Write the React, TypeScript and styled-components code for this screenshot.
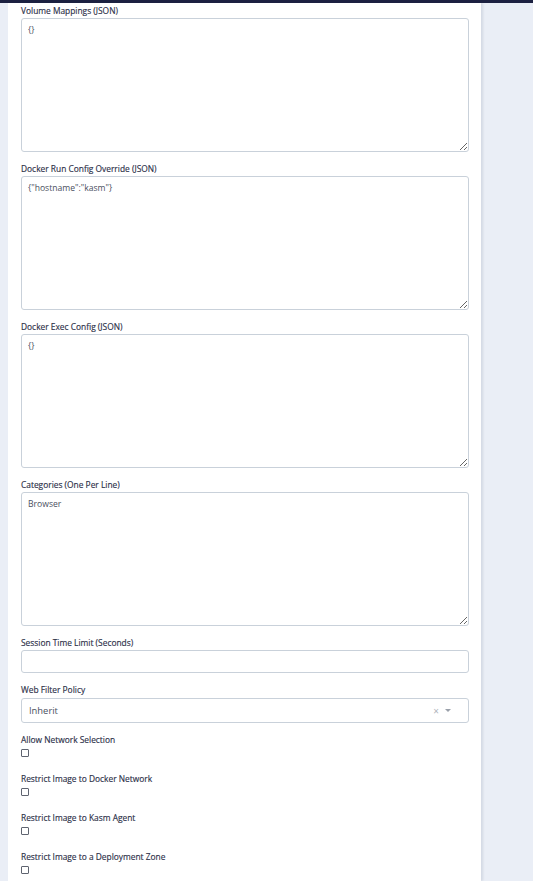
import styled, { createGlobalStyle } from "styled-components";

const GlobalStyle = createGlobalStyle`
  html, body {
    margin: 0;
    padding: 0;
    height: 100%;
    overflow: hidden;
    background-color: #eaeef6;
    font-family: "Open Sans", "Liberation Sans", sans-serif;
  }
`;

const TopBar = styled.div`
  height: 3px;
  background-color: #1c2141;
`;

const Page = styled.div`
  padding-left: 8px;
`;

const Card = styled.div`
  width: 473px;
  min-height: 878px;
  box-sizing: border-box;
  background-color: #ffffff;
  padding: 3px 12px 0 13px;
  box-shadow: 2px 0 2px rgba(60, 70, 100, 0.12);
`;

const Group = styled.div<{ $gap?: number }>`
  display: flex;
  flex-direction: column;
  align-items: flex-start;
  margin-bottom: ${(p) => p.$gap ?? 12}px;
`;

const Label = styled.label`
  display: block;
  font-size: 8.4px;
  line-height: 10px;
  font-weight: 500;
  color: #2c3048;
  margin-bottom: 2px;
  -webkit-text-stroke: 0.15px #2c3048;
`;

const TextArea = styled.textarea`
  display: block;
  width: 100%;
  height: 134px;
  box-sizing: border-box;
  border: 1px solid #c9d1da;
  border-radius: 3px;
  padding: 5px 6px;
  font-family: "Open Sans", "Liberation Sans", sans-serif;
  font-size: 8.6px;
  line-height: 12px;
  color: #4a5060;
  resize: vertical;
  outline: none;
`;

const TextInput = styled.input`
  display: block;
  width: 100%;
  height: 23px;
  box-sizing: border-box;
  border: 1px solid #c9d1da;
  border-radius: 3px;
  padding: 0 6px;
  font-family: "Open Sans", "Liberation Sans", sans-serif;
  font-size: 9px;
  color: #4a5060;
  outline: none;
`;

const SelectBox = styled.div`
  display: flex;
  align-items: center;
  width: 100%;
  height: 25px;
  margin-top: 1px;
  box-sizing: border-box;
  border: 1px solid #c9d1da;
  border-radius: 3px;
  padding: 0 17px 0 7px;
`;

const SelectValue = styled.span`
  flex: 1;
  font-size: 9.4px;
  color: #4a5060;
`;

const ClearMark = styled.span`
  font-size: 10px;
  line-height: 1;
  color: #b0b4bc;
  margin-right: 6px;
`;

const Caret = styled.span`
  width: 0;
  height: 0;
  border-left: 3px solid transparent;
  border-right: 3px solid transparent;
  border-top: 3px solid #9aa0aa;
`;

const Check = styled.input.attrs({ type: "checkbox" })`
  appearance: none;
  margin: 2px 0 0;
  width: 8px;
  height: 8px;
  box-sizing: border-box;
  border: 1px solid #5f6470;
  border-radius: 1px;
  background: #fff;
`;

const textFields = [
  { label: "Volume Mappings (JSON)", value: "{}" },
  { label: "Docker Run Config Override (JSON)", value: '{"hostname":"kasm"}' },
  { label: "Docker Exec Config (JSON)", value: "{}" },
  { label: "Categories (One Per Line)", value: "Browser" },
];

const checks = [
  "Allow Network Selection",
  "Restrict Image to Docker Network",
  "Restrict Image to Kasm Agent",
  "Restrict Image to a Deployment Zone",
];

export default function App() {
  return (
    <>
      <GlobalStyle />
      <TopBar />
      <Page>
        <Card>
          {textFields.map((f) => (
            <Group key={f.label}>
              <Label>{f.label}</Label>
              <TextArea defaultValue={f.value} />
            </Group>
          ))}
          <Group>
            <Label>Session Time Limit (Seconds)</Label>
            <TextInput />
          </Group>
          <Group>
            <Label>Web Filter Policy</Label>
            <SelectBox>
              <SelectValue>Inherit</SelectValue>
              <ClearMark>×</ClearMark>
              <Caret />
            </SelectBox>
          </Group>
          {checks.map((c) => (
            <Group key={c} $gap={17}>
              <Label>{c}</Label>
              <Check />
            </Group>
          ))}
        </Card>
      </Page>
    </>
  );
}
